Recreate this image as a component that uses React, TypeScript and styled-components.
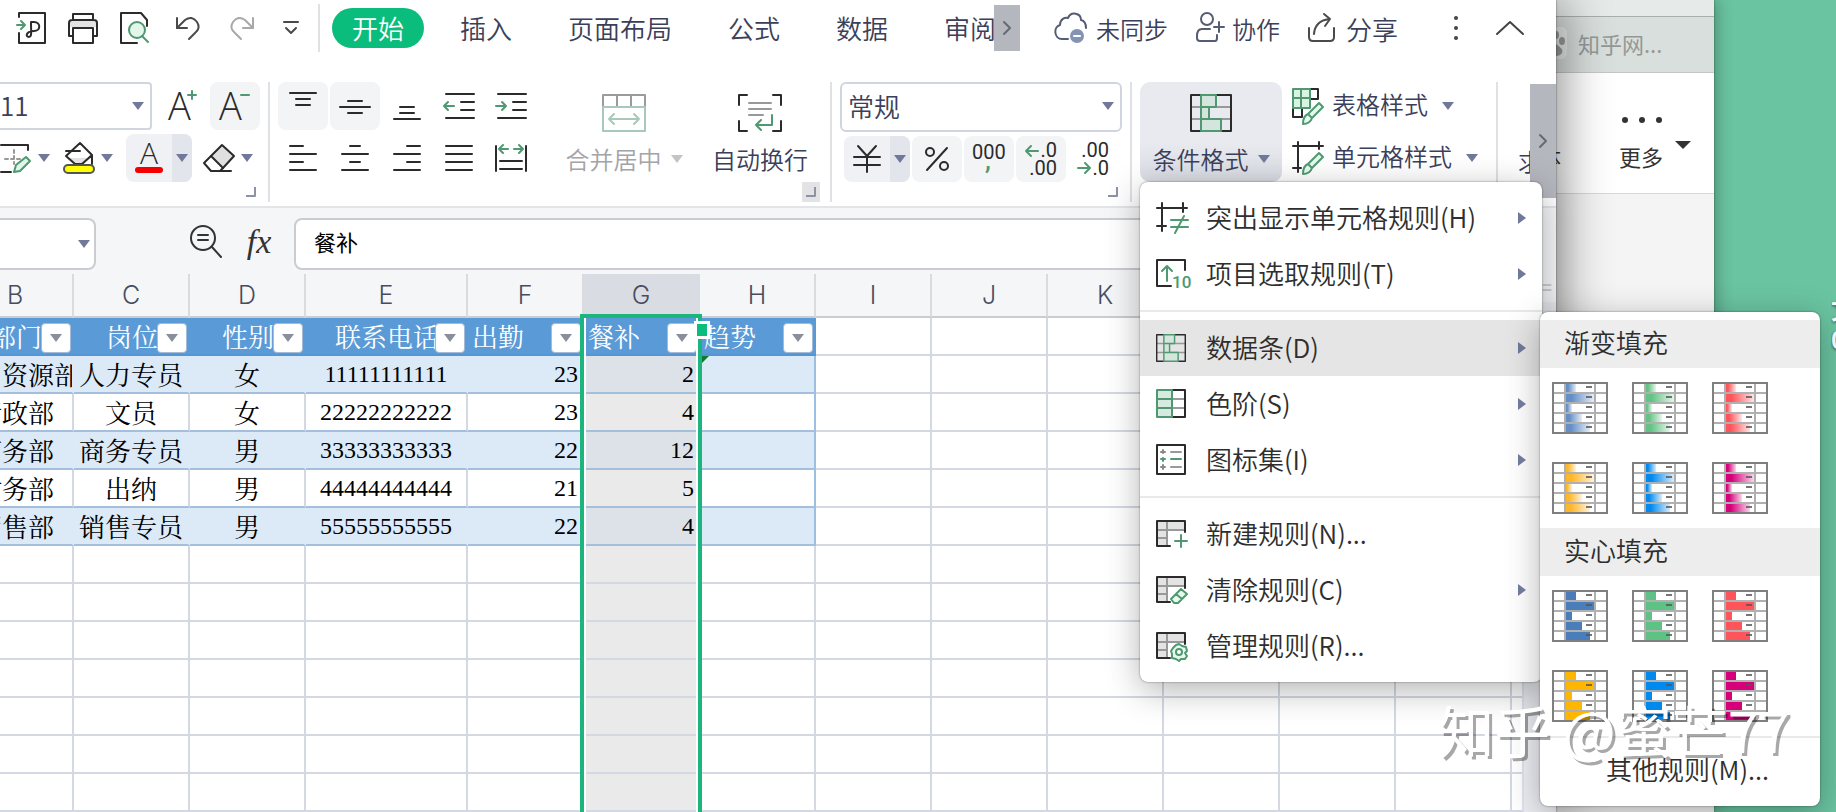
import React from "react";
import styled, { createGlobalStyle, css } from "styled-components";

const ink = "#2b2b2b";
const green = "#4f9872";
const mint = "#d6eadf";
const slate = "#70799a";
const label = "#3b405a";
const sans = '"Noto Sans CJK SC", "Liberation Sans", sans-serif';
const serif = '"Liberation Serif", "Noto Serif CJK SC", "Noto Sans CJK SC", serif';

const GlobalStyle = createGlobalStyle`
  * { box-sizing: border-box; }
  body { margin: 0; overflow: hidden; font-family: ${sans}; font-weight: 350; }
  button, input, select { font: inherit; color: inherit; }
  button { border: 0; padding: 0; background: none; }
`;

/* ---------- desktop ---------- */

const Desktop = styled.div`
  position: relative;
  display: flex;
  min-height: 100vh;
  background: #6ac4a1;
  overflow: hidden;
`;

const AppWindow = styled.main`
  position: relative;
  z-index: 2;
  flex: 1;
  min-width: 0;
  display: flex;
  flex-direction: column;
  background: #fff;
  box-shadow: 0 0 2px rgba(0, 0, 0, 0.5), 8px 0 44px rgba(0, 0, 0, 0.42);
`;

const BrowserWindow = styled.aside`
  position: relative;
  z-index: 1;
  flex: none;
  width: 158px;
  background: #f4f4f4;
  box-shadow: 0 0 2px rgba(0, 0, 0, 0.4), 2px 0 16px rgba(0, 0, 0, 0.3);
`;

const BrowserTop = styled.div`
  height: 17px;
  background: #e6ebe9;
  border-bottom: 1px solid #a9aeac;
`;

const BrowserTab = styled.div`
  height: 56px;
  display: flex;
  align-items: center;
  gap: 11px;
  padding-bottom: 4px;
  background: #d9dfdd;
  border-bottom: 1px solid #c3c7c5;
  color: #949997;
  font-size: 22px;
  font-weight: 400;
`;

const BrowserTools = styled.div`
  height: 121px;
  display: flex;
  background: #fff;
  border-bottom: 1px solid #d8d8d8;
  color: #333;
  font-size: 22px;
`;

const ClippedLabel = styled.span`
  width: 5px;
  height: 30px;
  margin-top: 68px;
  display: flex;
  justify-content: flex-end;
  overflow: hidden;
  line-height: 30px;
`;

const MoreButton = styled.button`
  margin: 38px 0 0 58px;
  display: flex;
  flex-direction: column;
  align-items: flex-start;
  gap: 12px;
  color: #333;
  font-weight: 400;
  span {
    display: flex;
    align-items: flex-start;
    gap: 12px;
    line-height: 30px;
  }
`;

const DesktopSpace = styled.div`
  flex: none;
  width: 122px;
  display: flex;
  justify-content: flex-end;
`;

const DesktopLabel = styled.div`
  width: 5px;
  height: 60px;
  margin-top: 294px;
  overflow: hidden;
  color: #fff;
  font-size: 24px;
  font-weight: 700;
  line-height: 30px;
  text-shadow: 0 1px 3px rgba(0, 0, 0, 0.6);
`;

/* ---------- title row ---------- */

const TopBar = styled.header`
  height: 56px;
  display: flex;
  align-items: center;
  color: ${label};
`;

const QuickAccess = styled.div`
  width: 318px;
  flex: none;
  display: flex;
  align-items: center;
  padding-left: 16px;
  gap: 26px;
`;

const QuickGroup = styled.div<{ $gap: number }>`
  display: flex;
  align-items: center;
  gap: ${(p) => p.$gap}px;
`;

const IconButton = styled.button`
  display: flex;
  align-items: center;
  justify-content: center;
`;

const Rule = styled.div<{ $h?: number }>`
  flex: none;
  width: 2px;
  height: ${(p) => p.$h ?? 120}px;
  background: #dfe1e5;
`;

const Tabs = styled.nav`
  flex: 0 1 674px;
  min-width: 0;
  display: flex;
  align-items: center;
  gap: 56px;
  padding-left: 12px;
  overflow: hidden;
`;

const Tab = styled.button<{ $active?: boolean }>`
  flex: none;
  font-size: 26px;
  line-height: 40px;
  white-space: nowrap;
  ${(p) =>
    p.$active &&
    css`
      padding: 0 20px;
      margin-right: -20px;
      border-radius: 20px;
      background: #0bbd7d;
      color: #fff;
    `}
`;

const ScrollButton = styled.button<{ $h: number }>`
  flex: none;
  width: 26px;
  height: ${(p) => p.$h}px;
  display: flex;
  align-items: center;
  justify-content: center;
  background: #b5b7bf;
`;

const Actions = styled.div`
  flex: 1;
  display: flex;
  align-items: center;
  gap: 28px;
  padding: 0 32px 0 34px;
`;

const Action = styled.button<{ $size?: number }>`
  display: flex;
  align-items: center;
  gap: 8px;
  font-size: ${(p) => p.$size ?? 24}px;
  white-space: nowrap;
`;

const Trailing = styled.div`
  margin-left: auto;
  display: flex;
  align-items: center;
  gap: 38px;
`;

/* ---------- ribbon ---------- */

const Ribbon = styled.section`
  display: flex;
  align-items: flex-start;
  padding: 26px 0 4px;
  border-bottom: 2px solid #e2e4e7;
  color: ${label};
  font-size: 24px;
`;

const Group = styled.div<{ $w?: number }>`
  flex: none;
  position: relative;
  height: 120px;
  width: ${(p) => (p.$w ? `${p.$w}px` : "auto")};
  display: flex;
  flex-direction: column;
  gap: 4px;
`;

const Line = styled.div<{ $gap?: number; $pl?: number }>`
  display: flex;
  align-items: center;
  gap: ${(p) => p.$gap ?? 2}px;
  padding-left: ${(p) => p.$pl ?? 0}px;
`;

const Tool = styled.button<{ $on?: boolean; $w?: number; $h?: number }>`
  flex: none;
  width: ${(p) => p.$w ?? 50}px;
  height: ${(p) => p.$h ?? 48}px;
  display: flex;
  align-items: center;
  justify-content: center;
  gap: 6px;
  border-radius: 8px;
  background: ${(p) => (p.$on ? "#f3f4f6" : "transparent")};
  color: ${ink};
`;

const SplitTool = styled.div<{ $h?: number }>`
  flex: none;
  width: 66px;
  height: ${(p) => p.$h ?? 48}px;
  display: flex;
  border-radius: 8px;
  overflow: hidden;
  background: #f0f1f4;
  button {
    height: 100%;
    display: flex;
    align-items: center;
    justify-content: center;
  }
  button:first-child {
    flex: 1;
  }
  button:last-child {
    width: 20px;
    background: #e2e5ec;
  }
`;

const SelectBox = styled.label<{ $w: number; $open?: boolean; $h?: number }>`
  position: relative;
  flex: none;
  width: ${(p) => p.$w}px;
  height: ${(p) => p.$h ?? 48}px;
  display: flex;
  select {
    appearance: none;
    width: 100%;
    padding: 0 0 4px ${(p) => (p.$open ? 0 : 6)}px;
    border: 2px solid #d0d5e0;
    border-left-width: ${(p) => (p.$open ? 0 : 2)}px;
    border-radius: ${(p) => (p.$open ? "0 4px 4px 0" : "6px")};
    background: #fff;
    color: ${label};
    font-size: 26px;
  }
  svg {
    position: absolute;
    right: 8px;
    top: 20px;
    pointer-events: none;
  }
`;

const Stack = styled.button<{ $muted?: boolean; $w: number }>`
  width: ${(p) => p.$w}px;
  height: 100px;
  padding-top: 12px;
  display: flex;
  flex-direction: column;
  align-items: center;
  gap: 12px;
  color: ${(p) => (p.$muted ? "#a3a4a8" : label)};
  span {
    display: flex;
    align-items: center;
    gap: 9px;
    line-height: 30px;
    white-space: nowrap;
  }
`;

const FormatButton = styled(Stack)`
  border-radius: 10px;
  background: linear-gradient(#e8eaef 60%, #d9dce3);
`;

const StyleTools = styled.div`
  display: flex;
  flex-direction: column;
  gap: 4px;
`;

const StyleButton = styled.button`
  height: 48px;
  display: flex;
  align-items: center;
  gap: 8px;
  white-space: nowrap;
  span {
    margin-right: 6px;
    padding-bottom: 4px;
    line-height: 34px;
  }
`;

const Corner = styled.button<{ $on?: boolean }>`
  position: absolute;
  right: ${(p) => (p.$on ? 10 : 12)}px;
  bottom: 0;
  width: 18px;
  height: 20px;
  display: flex;
  align-items: center;
  justify-content: ${(p) => (p.$on ? "center" : "flex-end")};
  background: ${(p) => (p.$on ? "#e3e3e6" : "transparent")};
`;

const ClippedTool = styled.div`
  flex: 1;
  min-width: 0;
  height: 120px;
  padding: 62px 0 0 20px;
  overflow: hidden;
  white-space: nowrap;
  line-height: 34px;
`;

const RibbonScroll = styled(ScrollButton)`
  margin-top: 2px;
`;

/* ---------- menus ---------- */

const panel = css`
  position: absolute;
  background: #fff;
  border-radius: 8px;
  padding: 8px 0;
  margin: 0;
  list-style: none;
  box-shadow: 0 0 2px rgba(0, 0, 0, 0.5), 0 8px 34px rgba(0, 0, 0, 0.3);
`;

const Menu = styled.ul`
  ${panel}
  z-index: 5;
  top: 100px;
  left: 8px;
  width: 402px;
`;

const MenuRow = styled.li<{ $active?: boolean }>`
  position: relative;
  background: ${(p) => (p.$active ? "#e5e5e5" : "transparent")};
`;

const MenuButton = styled.button`
  width: 100%;
  height: 56px;
  display: flex;
  align-items: center;
  gap: 17px;
  padding: 0 16px;
  color: #2e2e2e;
  font-size: 26px;
  text-align: left;
  white-space: nowrap;
  > span {
    padding-bottom: 4px;
  }
  > svg:last-child {
    margin-left: auto;
  }
`;

const Separator = styled.li<{ $tight?: boolean }>`
  height: 2px;
  margin: ${(p) => (p.$tight ? "0 0 4px" : "8px 0")};
  background: #e9e9e9;
`;

const SubMenu = styled.ul`
  ${panel}
  top: -8px;
  left: 400px;
  width: 280px;
`;

const SubHeading = styled.h3`
  margin: 0;
  padding: 0 0 4px 24px;
  background: #ededed;
  color: #2e2e2e;
  font-size: 26px;
  font-weight: 350;
  line-height: 44px;
`;

const Swatches = styled.div`
  display: grid;
  grid-template-columns: repeat(3, 80px);
  grid-auto-rows: 80px;
  padding-left: 12px;
  button {
    display: flex;
    align-items: flex-start;
    padding-top: 14px;
  }
`;

const OtherRules = styled(MenuButton)`
  padding-left: 66px;
`;

/* ---------- formula bar and sheet ---------- */

const FormulaBar = styled.section`
  height: 66px;
  flex: none;
  display: flex;
  align-items: flex-start;
  padding: 10px 36px 0 0;
  background: #f5f6f8;
  color: #000;
`;

const NameBox = styled.label`
  position: relative;
  width: 96px;
  flex: none;
  input {
    width: 100%;
    height: 52px;
    border: 2px solid #cacccf;
    border-left: 0;
    border-radius: 0 8px 8px 0;
    background: #fff;
  }
  svg {
    position: absolute;
    right: 6px;
    top: 22px;
  }
`;

const FormulaTools = styled.div`
  width: 198px;
  flex: none;
  height: 52px;
  display: flex;
  align-items: center;
  padding: 0 0 4px 94px;
  gap: 20px;
`;

const Fx = styled.button`
  width: 34px;
  font: italic 34px/40px "Liberation Serif", serif;
  color: #333;
`;

const FormulaInput = styled.input`
  flex: 1;
  min-width: 0;
  height: 52px;
  padding: 0 18px 6px;
  border: 2px solid #cacccf;
  border-radius: 8px;
  background: #fff;
  font-size: 22px;
  font-weight: 400;
`;

const SheetArea = styled.section`
  flex: 1;
  display: flex;
`;

const SheetView = styled.div`
  position: relative;
  flex: 1;
  min-width: 0;
  overflow: hidden;
`;

const Grid = styled.table`
  table-layout: fixed;
  width: 1670px;
  margin-left: -42px;
  border-collapse: separate;
  border-spacing: 0;
`;

const ColumnHead = styled.th<{ $selected?: boolean }>`
  height: 44px;
  padding: 0;
  border-bottom: 2px solid #c9ccd2;
  border-right: 2px solid ${(p) => (p.$selected ? "#dadce4" : "#d9dbe0")};
  background: ${(p) => (p.$selected ? "#dadce4" : "#f5f6f8")};
  color: #474c61;
  font: 300 25px/40px Inter, sans-serif;
`;

const FieldHead = styled.th<{ $left?: boolean }>`
  position: relative;
  height: 38px;
  padding: 0 0 0 ${(p) => (p.$left ? 4 : 0)}px;
  border-bottom: 2px solid #5496d3;
  background: #5a9ad7;
  color: #fff;
  text-align: ${(p) => (p.$left ? "left" : "center")};
`;

const FilterButton = styled.button`
  position: absolute;
  right: 3px;
  top: 5px;
  width: 30px;
  height: 30px;
  display: flex;
  align-items: center;
  justify-content: center;
  border: 1px solid #a3bbd6;
  border-radius: 4px;
  background: #fff;
`;

const Cell = styled.td<{ $band?: boolean; $data?: boolean; $selected?: boolean; $num?: boolean; $edge?: boolean }>`
  height: 38px;
  padding: 0 ${(p) => (p.$num ? 4 : 0)}px 0 0;
  overflow: hidden;
  border-bottom: 2px solid ${(p) => (p.$data ? "#a3bfdb" : "#d3d8e3")};
  border-right: 2px solid
    ${(p) => (p.$edge ? "#9cc0e4" : p.$band ? (p.$selected ? "#dde1e8" : "#dceaf7") : "#d3d8e3")};
  background: ${(p) =>
    p.$band ? (p.$selected ? "#dde1e8" : "#dceaf7") : p.$selected ? "#eaeaea" : "#fff"};
  color: #000;
  font: 400 24px/36px ${serif};
  text-align: ${(p) => (p.$num ? "right" : "center")};
  white-space: nowrap;
`;

const CellText = styled.div<{ $left?: boolean }>`
  display: flex;
  justify-content: ${(p) => (p.$left ? "flex-start" : "center")};
  height: 36px;
  padding-top: 3px;
  overflow: hidden;
  font: 400 26px/36px ${serif};
  white-space: nowrap;
`;

const Selection = styled.div`
  position: absolute;
  top: 40px;
  bottom: 0;
  left: 580px;
  width: 122px;
  border: 4px solid #1bb57d;
  border-bottom: 0;
  box-shadow: inset 2px 0 #fff, inset -2px 0 #fff;
  pointer-events: none;
`;

const FillHandle = styled.div`
  position: absolute;
  top: 47px;
  left: 694px;
  width: 16px;
  height: 18px;
  border: 3px solid #fff;
  background: #0bbd7d;
`;

const ErrorMark = styled.div`
  position: absolute;
  top: 82px;
  left: 702px;
  border-top: 7px solid #0d7a2c;
  border-right: 7px solid transparent;
`;

const Gutter = styled.div`
  flex: none;
  width: 34px;
  display: flex;
  flex-direction: column;
  align-items: flex-end;
  background: #eceef3;
  border-left: 2px solid #dfe2ea;
`;

const SplitHandle = styled.div`
  align-self: stretch;
  height: 28px;
  display: flex;
  align-items: center;
  justify-content: flex-end;
  padding-right: 5px;
  background: #f5f6f8;
`;

const Watermark = styled.div`
  position: absolute;
  z-index: 10;
  right: 46px;
  bottom: 46px;
  color: #fff;
  font: 400 56px/74px "Noto Sans CJK SC", sans-serif;
  white-space: nowrap;
  text-shadow: 3px 3px 0 rgba(0, 0, 0, 0.34);
  pointer-events: none;
`;

/* ---------- icons ---------- */

const Svg = styled.svg`
  flex: none;
  display: block;
  overflow: visible;
  fill: none;
  stroke: ${ink};
  stroke-width: 2;
  stroke-linecap: round;
  stroke-linejoin: round;
`;

type IconProps = { w: number; h: number; children: React.ReactNode };
const Icon = ({ w, h, children }: IconProps) => (
  <Svg width={w} height={h} viewBox={`0 0 ${w} ${h}`} aria-hidden="true">
    {children}
  </Svg>
);

const Down = ({ color = slate, size = 12 }: { color?: string; size?: number }) => (
  <Icon w={size} h={8}>
    <path d={`M0 0H${size}L${size / 2} 8Z`} fill={color} stroke="none" />
  </Icon>
);
const Right = () => (
  <Icon w={8} h={12}>
    <path d="M0 0V12L8 6Z" fill={slate} stroke="none" />
  </Icon>
);
const Chevron = () => (
  <Icon w={8} h={14}>
    <path d="M1 1L7 7L1 13" stroke="#666a74" />
  </Icon>
);
const CornerMark = () => (
  <Icon w={10} h={10}>
    <path d="M9 0V9H0" stroke="#8d92a6" strokeLinecap="butt" />
  </Icon>
);

const glyph = { stroke: "none", fontWeight: 300 } as const;

const Export = () => (
  <Icon w={30} h={32}>
    <path d="M3 5V1H29V31H3V21" />
    <path d="M1 13H9M5 9L9 13L5 17" stroke={green} />
    <path d="M15 10H18C25 10 25 19 18 19C10 19 9 25 13 25C16 25 15 21 15 10" />
  </Icon>
);
const Printer = () => (
  <Icon w={30} h={32}>
    <path d="M1 9H29V15H1Z" fill="#e3e3e3" stroke="none" />
    <path d="M5 8V2H25V8M4 24H1V11Q1 8 4 8H26Q29 8 29 11V24H26" />
    <path d="M5 16H25V31H5Z" />
  </Icon>
);
const Preview = () => (
  <Icon w={30} h={32}>
    <path d="M17 31H1V1H21L27 8V14" />
    <circle cx="17" cy="18" r="8" fill="#e3f6ea" stroke={green} />
    <path d="M22 24L28 30" stroke={green} />
  </Icon>
);
const Undo = ({ flip }: { flip?: boolean }) => (
  <Icon w={24} h={24}>
    <g transform={flip ? "translate(24 0) scale(-1 1)" : undefined} stroke={flip ? "#a8a8a8" : "#4a4a4a"}>
      <path d="M1 2V12H11" />
      <path d="M1 12L9 4Q16 -1 21 6Q25 12 19 17L13 23" />
    </g>
  </Icon>
);
const Customize = () => (
  <Icon w={14} h={14}>
    <path d="M0 1H14M2 7L7 12L12 7" stroke="#4a4a4a" />
  </Icon>
);

const Cloud = () => (
  <Icon w={34} h={32}>
    <path
      d="M14 27H8C0 27-1 15 6 13C6 7 11 5 14 6C17-1 27 1 27 8C31 9 32 13 32 16"
      stroke="#565c74"
    />
    <circle cx="23" cy="24" r="7" fill="#8593b3" stroke="none" />
    <path d="M20 24H26" stroke="#fff" />
  </Icon>
);
const Collaborate = () => (
  <Icon w={28} h={32}>
    <circle cx="11" cy="7" r="6" stroke="#565c74" />
    <path d="M14 17H6Q1 17 1 24V26Q1 29 4 29H19Q21 29 21 26V23M23 10V20M18 15H28" stroke="#565c74" />
  </Icon>
);
const Share = () => (
  <Icon w={30} h={30}>
    <path d="M1 15V24Q1 28 5 28H22Q26 28 26 24V15M6 21Q7 8 21 6M16 1L22 6L17 13" stroke="#4a4a4a" />
  </Icon>
);
const MoreDots = () => (
  <Icon w={4} h={24}>
    {[2, 12, 22].map((y) => (
      <circle key={y} cx="2" cy={y} r="2" fill="#444" stroke="none" />
    ))}
  </Icon>
);
const Collapse = () => (
  <Icon w={28} h={14}>
    <path d="M1 13L14 1L27 13" stroke="#444" />
  </Icon>
);

const FontStep = ({ plus }: { plus?: boolean }) => (
  <Icon w={32} h={32}>
    <text x={plus ? 3 : 0} y="30" fontSize="38" fontFamily="Open Sans" fill={ink} {...glyph}>
      A
    </text>
    <path d={plus ? "M27 1V9M23 5H31" : "M22 5H30"} stroke={green} />
  </Icon>
);
const BordersIcon = () => (
  <Icon w={31} h={32}>
    <path d="M0 3H27V8M0 30H10" />
    <path d="M13 8V22M4 17H20" stroke="#999" strokeDasharray="3 3" />
    <path d="M13 30L15 23L25 15L29 19L19 29Z" fill="#e0f7e9" stroke={green} />
  </Icon>
);
const FillIcon = () => (
  <Icon w={32} h={32}>
    <path d="M6 16H28L18 24H13Z" fill="#e3e3e3" stroke="none" />
    <path d="M17 1L29 13L19 22H12L3 14Z M29 13V22M3 9H17" />
    <rect x="1" y="23" width="30" height="8" rx="4" fill="#ff0" stroke="#555" />
  </Icon>
);
const FontColorIcon = () => (
  <Icon w={28} h={30}>
    <text x="5" y="21" fontSize="30" fontFamily="Open Sans" fill={ink} {...glyph}>
      A
    </text>
    <rect x="0" y="24" width="28" height="6" rx="3" fill="#f40000" stroke="none" />
  </Icon>
);
const EraserIcon = () => (
  <Icon w={32} h={28}>
    <path d="M8 12L19 1L31 12L20 24Z" fill="#e0e0e0" />
    <path d="M8 12L1 19L8 27H28M20 24L17 27" />
  </Icon>
);

const Bars = ({ rows }: { rows: [number, number, number][] }) => (
  <Icon w={32} h={28}>
    {rows.map(([x1, x2, y]) => (
      <path key={y} d={`M${x1} ${y}H${x2}`} />
    ))}
  </Icon>
);

const Indent = ({ out }: { out?: boolean }) => (
  <Icon w={32} h={26}>
    <path d="M3 1H31M18 9H31M18 17H31M3 25H31" />
    <path d={out ? "M1 13H11M5 9L1 13L5 17" : "M1 13H11M7 9L11 13L7 17"} stroke={green} />
  </Icon>
);
const Distribute = () => (
  <Icon w={32} h={28}>
    <path d="M1 2V27M31 2V27M5 17H27M5 25H27" />
    <path d="M4 5H13M8 1L4 5L8 9M19 5H28M24 1L28 5L24 9" stroke={green} />
  </Icon>
);
const MergeIcon = () => (
  <Icon w={44} h={38}>
    <path d="M1 13V1H43V13M15 1V13M29 1V13" stroke="#9b9b9b" />
    <path d="M1 13H43V37H1ZM7 25H37M12 20L7 25L12 30M32 20L37 25L32 30" stroke="#a8c9ba" />
  </Icon>
);
const WrapIcon = () => (
  <Icon w={44} h={38}>
    <path d="M1 11V1H9M35 1H43V11M43 27V37H35M9 37H1V27" />
    <path d="M11 9H33M11 15H33M11 21H25" stroke="#999" />
    <path d="M34 21V31H18M23 26L18 31L23 36" stroke={green} />
  </Icon>
);
const YuanIcon = () => (
  <Icon w={28} h={28}>
    <path d="M5 1L14 11L23 1M1 12H27M1 20H27M14 12V27" />
  </Icon>
);
const PercentIcon = () => (
  <Icon w={26} h={26}>
    <circle cx="6" cy="6" r="4" />
    <circle cx="20" cy="20" r="4" />
    <path d="M23 2L3 24" />
  </Icon>
);
const digits = { fontSize: 20, fontFamily: "Roboto", fontWeight: 400, fill: ink, stroke: "none" } as const;
const ThousandsIcon = () => (
  <Icon w={36} h={32}>
    <text x="1" y="16" {...digits}>
      000
    </text>
    <text x="14" y="26" fontSize="26" fontFamily="Roboto" fontWeight="500" fill={green} stroke="none">
      ,
    </text>
  </Icon>
);
const DecimalIcon = ({ less }: { less?: boolean }) => (
  <Icon w={34} h={34}>
    <text x="33" y="15" textAnchor="end" {...digits}>
      {less ? ".00" : ".0"}
    </text>
    <text x="33" y="33" textAnchor="end" {...digits}>
      {less ? ".0" : ".00"}
    </text>
    <path d={less ? "M2 26H14M9 21L14 26L9 31" : "M2 9H14M7 4L2 9L7 14"} stroke={green} />
  </Icon>
);
const DataBarsIcon = ({ w, h }: { w: number; h: number }) => (
  <Svg width={w} height={h} viewBox="0 0 42 38" preserveAspectRatio="none" aria-hidden="true">
    <path d="M1 13H41M1 25H41" stroke="#999" />
    <path d="M1 1H41V37H1Z" />
    <path d="M11 1H26V13H11ZM11 13H19V25H11ZM11 25H31V37H11Z" fill="#d3e5dc" stroke={green} />
  </Svg>
);
const TableStyleIcon = () => (
  <Icon w={32} h={38}>
    <path d="M17 2H26V12M17 12H26M1 20V30H10V20" />
    <path d="M1 2H18V21H1ZM9 2V21M1 11H18" fill="#d8f3e2" stroke={green} />
    <path d="M16 27L27 16L31 20L20 31Q18 37 11 37Q11 29 16 27ZM16 27L20 31" fill="#e3faec" stroke={green} />
  </Icon>
);
const CellStyleIcon = () => (
  <Icon w={32} h={34}>
    <path d="M1 5H31M6 1V31M27 1V8M1 27H9" />
    <path d="M16 23L27 12L31 16L20 27Q18 33 11 33Q11 25 16 23ZM16 23L20 27" fill="#e3faec" stroke={green} />
  </Icon>
);

const HighlightIcon = () => (
  <Icon w={33} h={32}>
    <path d="M1 6H31M6 1V29M27 1V10M1 24H10" />
    <path d="M15 18H32M15 25H32M28 14L19 31" stroke={green} />
  </Icon>
);
const TopTenIcon = () => (
  <Icon w={33} h={32}>
    <path d="M29 12V2H1V28H15" />
    <path d="M11 8V23M6 13L11 8L16 13" stroke={green} />
    <text x="16" y="30" fontSize="17" fontFamily="Roboto" fontWeight="500" fill={green} stroke="none">
      10
    </text>
  </Icon>
);
const DataBarsMenuIcon = () => (
  <Icon w={33} h={28}>
    <DataBarsIcon w={30} h={28} />
  </Icon>
);
const ColorScaleIcon = () => (
  <Icon w={33} h={30}>
    <path d="M16 10H29M16 19H29" stroke="#999" />
    <path d="M16 1H29V28H16" />
    <path d="M1 1H16V28H1ZM1 10H16M1 19H16" fill={mint} stroke={green} />
  </Icon>
);
const IconSetIcon = () => (
  <Icon w={33} h={32}>
    <path d="M1 1H29V30H1Z" />
    <path d="M15 8H25M15 23H25" stroke="#999" />
    <path d="M15 15H25" stroke={green} />
    <path d="M7 6V9M5 8H9M7 21V25M5 23H9" stroke="#888" />
    <path d="M7 14V17M5 15H9" stroke={green} />
  </Icon>
);
const RuleIcon = ({ children }: { children: React.ReactNode }) => (
  <Icon w={33} h={32}>
    <path d="M1 4H29V12H11V28H1Z" fill="#e3e3e3" stroke="none" />
    <path d="M11 4V28M1 12H29M1 20H11" stroke="#999" />
    <path d="M29 14V3H1V28H14" />
    <g stroke={green}>{children}</g>
  </Icon>
);
const PlusMark = () => <path d="M25 17V29M19 23H31" />;
const EraseMark = () => <path d="M15 25L25 15L31 20L22 29H18ZM20 20L26 25" fill="#e3faec" />;
const GearMark = () => (
  <>
    <path
      d="M20 15L23 14L26 16L30 17L31 21L29 23L31 26L29 29L25 29L23 31L20 29L16 28L16 24L15 21L17 18Z"
      fill="#e3faec"
    />
    <circle cx="23" cy="22" r="3" fill="#fff" />
  </>
);

const SearchIcon = () => (
  <Icon w={32} h={34}>
    <circle cx="13" cy="13" r="12" stroke="#333" />
    <path d="M22 22L31 32M8 10H18M8 15H18" stroke="#333" />
  </Icon>
);

const barEnds = [10, 28, 6, 16, 24];
const BarSwatch = ({ color, fade, id }: { color: string; fade?: boolean; id: string }) => (
  <Icon w={56} h={52}>
    <defs>
      <linearGradient id={id} x1="0" x2="1">
        <stop offset="0.2" stopColor={color} stopOpacity="1" />
        <stop offset="1" stopColor={color} stopOpacity="0.16" />
      </linearGradient>
    </defs>
    <g stroke="none">
      {barEnds.map((w, i) => (
        <g key={w}>
          <rect x="14" y={2 + i * 10} width={w} height="9" fill={fade ? `url(#${id})` : color} />
          <rect x="34" y={4 + i * 10} width="6" height="2" fill="#555" opacity="0.8" />
        </g>
      ))}
    </g>
    <path d="M13 1V51M43 1V51M1 11H55M1 21H55M1 31H55M1 41H55" stroke="#b0b0b0" />
    <path d="M1 1H55V51H1Z" stroke="#7f7f7f" strokeLinejoin="miter" />
  </Icon>
);

/* ---------- data ---------- */

const gradientColors = [
  ["蓝色渐变", "#638ec6"],
  ["绿色渐变", "#63c384"],
  ["红色渐变", "#ff555a"],
  ["橙色渐变", "#ffb628"],
  ["浅蓝渐变", "#008aef"],
  ["紫色渐变", "#d6007b"],
];
const solidColors = [
  ["蓝色", "#4a7ebb"],
  ["绿色", "#5fc285"],
  ["红色", "#ff555a"],
  ["橙色", "#ffb600"],
  ["浅蓝", "#008aef"],
  ["紫色", "#d6007b"],
];

const columns = ["B", "C", "D", "E", "F", "G", "H", "I", "J", "K", "L", "M", "N", "O"];
const fields: [string, boolean][] = [
  ["部门", false],
  ["岗位", false],
  ["性别", false],
  ["联系电话", false],
  ["出勤", true],
  ["餐补", true],
  ["趋势", true],
];
const staff = [
  ["人力资源部", "人力专员", "女", "11111111111", "23", "2"],
  ["行政部", "文员", "女", "22222222222", "23", "4"],
  ["商务部", "商务专员", "男", "33333333333", "22", "12"],
  ["财务部", "出纳", "男", "44444444444", "21", "5"],
  ["销售部", "销售专员", "男", "55555555555", "22", "4"],
];
const emptyRows = [7, 8, 9, 10, 11, 12, 13];

/* ---------- composed parts ---------- */

const Item = ({
  icon,
  text,
  arrow,
  active,
  children,
}: {
  icon: React.ReactNode;
  text: string;
  arrow?: boolean;
  active?: boolean;
  children?: React.ReactNode;
}) => (
  <MenuRow $active={active}>
    <MenuButton>
      {icon}
      <span>{text}</span>
      {arrow && <Right />}
    </MenuButton>
    {children}
  </MenuRow>
);

const SwatchSet = ({ title, colors, fade }: { title: string; colors: string[][]; fade?: boolean }) => (
  <li>
    <SubHeading>{title}</SubHeading>
    <Swatches>
      {colors.map(([name, color]) => (
        <button key={name} aria-label={name}>
          <BarSwatch color={color} fade={fade} id={`bar-${fade ? "fade" : "solid"}-${color.slice(1)}`} />
        </button>
      ))}
    </Swatches>
  </li>
);

const FormatMenu = () => (
  <Menu>
    <Item icon={<HighlightIcon />} text="突出显示单元格规则(H)" arrow />
    <Item icon={<TopTenIcon />} text="项目选取规则(T)" arrow />
    <Separator />
    <Item icon={<DataBarsMenuIcon />} text="数据条(D)" arrow active>
      <SubMenu>
        <SwatchSet title="渐变填充" colors={gradientColors} fade />
        <SwatchSet title="实心填充" colors={solidColors} />
        <Separator $tight />
        <li>
          <OtherRules><span>其他规则(M)...</span></OtherRules>
        </li>
      </SubMenu>
    </Item>
    <Item icon={<ColorScaleIcon />} text="色阶(S)" arrow />
    <Item icon={<IconSetIcon />} text="图标集(I)" arrow />
    <Separator />
    <Item icon={<RuleIcon><PlusMark /></RuleIcon>} text="新建规则(N)..." />
    <Item icon={<RuleIcon><EraseMark /></RuleIcon>} text="清除规则(C)" arrow />
    <Item icon={<RuleIcon><GearMark /></RuleIcon>} text="管理规则(R)..." />
  </Menu>
);

const Sheet = () => (
  <SheetArea>
    <SheetView>
      <Grid>
        <colgroup>
          {columns.map((c) => (
            <col key={c} style={{ width: c === "E" ? 162 : 116 }} />
          ))}
        </colgroup>
        <thead>
          <tr>
            {columns.map((c) => (
              <ColumnHead key={c} $selected={c === "G"}>
                {c}
              </ColumnHead>
            ))}
          </tr>
        </thead>
        <tbody>
          <tr>
            {fields.map(([name, left]) => (
              <FieldHead key={name} $left={left}>
                <CellText $left={left}>{name}</CellText>
                <FilterButton aria-label={`筛选${name}`}>
                  <Down color="#8b8f9c" />
                </FilterButton>
              </FieldHead>
            ))}
            {columns.slice(7).map((c) => (
              <Cell key={c} />
            ))}
          </tr>
          {staff.map(([dept, job, sex, phone, days, meal], i) => {
            const band = i % 2 === 0;
            return (
              <tr key={phone}>
                {[dept, job, sex].map((v) => (
                  <Cell key={v} $data $band={band}>
                    <CellText>{v}</CellText>
                  </Cell>
                ))}
                <Cell $data $band={band}>{phone}</Cell>
                <Cell $data $band={band} $num>
                  {days}
                </Cell>
                <Cell $data $band={band} $num $selected>
                  {meal}
                </Cell>
                <Cell $data $band={band} $edge />
                {columns.slice(7).map((c) => (
                  <Cell key={c} />
                ))}
              </tr>
            );
          })}
          {emptyRows.map((r) => (
            <tr key={r}>
              {columns.map((c) => (
                <Cell key={c} $selected={c === "G"} />
              ))}
            </tr>
          ))}
        </tbody>
      </Grid>
      <Selection />
      <FillHandle />
      <ErrorMark />
    </SheetView>
    <Gutter>
      <SplitHandle>
        <Icon w={8} h={6}>
          <path d="M0 0H8M0 5H8" stroke="#a2a6b8" strokeWidth="1" />
        </Icon>
      </SplitHandle>
    </Gutter>
  </SheetArea>
);

export default function App() {
  return (
    <Desktop>
      <GlobalStyle />
      <AppWindow>
        <TopBar>
          <QuickAccess>
            <QuickGroup $gap={22}>
              <IconButton aria-label="输出为PDF"><Export /></IconButton>
              <IconButton aria-label="打印"><Printer /></IconButton>
              <IconButton aria-label="打印预览"><Preview /></IconButton>
            </QuickGroup>
            <QuickGroup $gap={30}>
              <IconButton aria-label="撤销"><Undo /></IconButton>
              <IconButton aria-label="恢复"><Undo flip /></IconButton>
              <IconButton aria-label="自定义快速访问"><Customize /></IconButton>
            </QuickGroup>
          </QuickAccess>
          <Rule $h={48} />
          <Tabs>
            <Tab $active>开始</Tab>
            <Tab>插入</Tab>
            <Tab>页面布局</Tab>
            <Tab>公式</Tab>
            <Tab>数据</Tab>
            <Tab>审阅</Tab>
          </Tabs>
          <ScrollButton $h={46} aria-label="更多选项卡"><Chevron /></ScrollButton>
          <Actions>
            <Action><Cloud />未同步</Action>
            <Action><Collaborate />协作</Action>
            <Action $size={26}><Share />分享</Action>
            <Trailing>
              <IconButton aria-label="更多"><MoreDots /></IconButton>
              <IconButton aria-label="折叠功能区"><Collapse /></IconButton>
            </Trailing>
          </Actions>
        </TopBar>

        <Ribbon>
          <Group $w={268}>
            <Line $gap={4}>
              <SelectBox $w={152} $open>
                <select aria-label="字号"><option>11</option></select>
                <Down />
              </SelectBox>
              <Tool aria-label="增大字号"><FontStep plus /></Tool>
              <Tool $on aria-label="减小字号"><FontStep /></Tool>
            </Line>
            <Line $gap={8}>
              <Tool $w={50} aria-label="边框"><BordersIcon /><Down /></Tool>
              <Tool $w={60} aria-label="填充颜色"><FillIcon /><Down /></Tool>
              <SplitTool>
                <button aria-label="字体颜色"><FontColorIcon /></button>
                <button aria-label="选择字体颜色"><Down /></button>
              </SplitTool>
              <Tool $w={56} aria-label="清除"><EraserIcon /><Down /></Tool>
            </Line>
            <Corner aria-label="字体设置"><CornerMark /></Corner>
          </Group>
          <Rule />
          <Group $w={268}>
            <Line $pl={8}>
              <Tool $on aria-label="顶端对齐"><Bars rows={[[3, 29, 1], [9, 23, 7], [9, 23, 13]]} /></Tool>
              <Tool $on aria-label="垂直居中"><Bars rows={[[9, 23, 9], [1, 31, 15], [9, 23, 21]]} /></Tool>
              <Tool aria-label="底端对齐"><Bars rows={[[9, 23, 15], [9, 23, 21], [3, 29, 27]]} /></Tool>
              <Tool aria-label="减少缩进"><Indent out /></Tool>
              <Tool aria-label="增加缩进"><Indent /></Tool>
            </Line>
            <Line $pl={8}>
              <Tool aria-label="左对齐"><Bars rows={[[3, 16, 2], [3, 29, 10], [3, 16, 18], [3, 29, 26]]} /></Tool>
              <Tool aria-label="居中"><Bars rows={[[11, 21, 2], [3, 29, 10], [11, 21, 18], [3, 29, 26]]} /></Tool>
              <Tool aria-label="右对齐"><Bars rows={[[16, 29, 2], [3, 29, 10], [16, 29, 18], [3, 29, 26]]} /></Tool>
              <Tool aria-label="两端对齐"><Bars rows={[[3, 29, 2], [3, 29, 10], [3, 29, 18], [3, 29, 26]]} /></Tool>
              <Tool aria-label="分散对齐"><Distribute /></Tool>
            </Line>
          </Group>
          <Group $w={292}>
            <Line $gap={14} $pl={20}>
              <Stack $w={132} $muted>
                <MergeIcon />
                <span>合并居中<Down color="#c3c4c8" /></span>
              </Stack>
              <Stack $w={112}>
                <WrapIcon />
                <span>自动换行</span>
              </Stack>
            </Line>
            <Corner $on aria-label="对齐设置"><CornerMark /></Corner>
          </Group>
          <Rule />
          <Group $w={298}>
            <Line $pl={8}>
              <SelectBox $w={282} $h={50}>
                <select aria-label="数字格式"><option>常规</option></select>
                <Down />
              </SelectBox>
            </Line>
            <Line $pl={12}>
              <SplitTool $h={46}>
                <button aria-label="货币格式"><YuanIcon /></button>
                <button aria-label="选择货币"><Down /></button>
              </SplitTool>
              <Tool $on $h={46} aria-label="百分比"><PercentIcon /></Tool>
              <Tool $on $h={46} aria-label="千位分隔"><ThousandsIcon /></Tool>
              <Tool $on $h={46} aria-label="增加小数位"><DecimalIcon /></Tool>
              <Tool $h={46} aria-label="减少小数位"><DecimalIcon less /></Tool>
            </Line>
            <Corner aria-label="数字设置"><CornerMark /></Corner>
          </Group>
          <Rule />
          <Group $w={364}>
            <Line $gap={10} $pl={8}>
              <FormatButton $w={142}>
                <DataBarsIcon w={42} h={38} />
                <span>条件格式<Down /></span>
              </FormatButton>
              <StyleTools>
                <StyleButton><TableStyleIcon /><span>表格样式</span><Down /></StyleButton>
                <StyleButton><CellStyleIcon /><span>单元格样式</span><Down /></StyleButton>
              </StyleTools>
            </Line>
            <FormatMenu />
          </Group>
          <Rule />
          <ClippedTool>求和</ClippedTool>
          <RibbonScroll $h={114} aria-label="更多工具"><Chevron /></RibbonScroll>
        </Ribbon>

        <FormulaBar>
          <NameBox>
            <input type="text" aria-label="名称框" />
            <Down />
          </NameBox>
          <FormulaTools>
            <IconButton aria-label="查找"><SearchIcon /></IconButton>
            <Fx>fx</Fx>
          </FormulaTools>
          <FormulaInput type="text" aria-label="编辑栏" defaultValue="餐补" />
        </FormulaBar>

        <Sheet />
      </AppWindow>

      <BrowserWindow>
        <BrowserTop />
        <BrowserTab>
          <Icon w={11} h={32}>
            <rect x="-18" y="0" width="29" height="32" rx="6" fill="#e9edeb" stroke="none" />
            <g fill="#9a9e9c" stroke="none">
              <ellipse cx="0" cy="8" rx="3" ry="4" />
              <ellipse cx="6" cy="14" rx="3" ry="4" />
              <path d="M0 17Q8 22 6 26Q4 29 0 29Z" />
            </g>
          </Icon>
          知乎网...
        </BrowserTab>
        <BrowserTools>
          <ClippedLabel>体</ClippedLabel>
          <MoreButton>
            <Icon w={48} h={18}>
              {[10, 27, 44].map((x) => (
                <circle key={x} cx={x - 4} cy="9" r="3" fill="#333" stroke="none" />
              ))}
            </Icon>
            <span>更多<Down color="#333" size={16} /></span>
          </MoreButton>
        </BrowserTools>
      </BrowserWindow>
      <DesktopSpace>
        <DesktopLabel>
          <div>文</div>
          <div>0</div>
        </DesktopLabel>
      </DesktopSpace>
      <Watermark>知乎 @蜜芒77</Watermark>
    </Desktop>
  );
}
